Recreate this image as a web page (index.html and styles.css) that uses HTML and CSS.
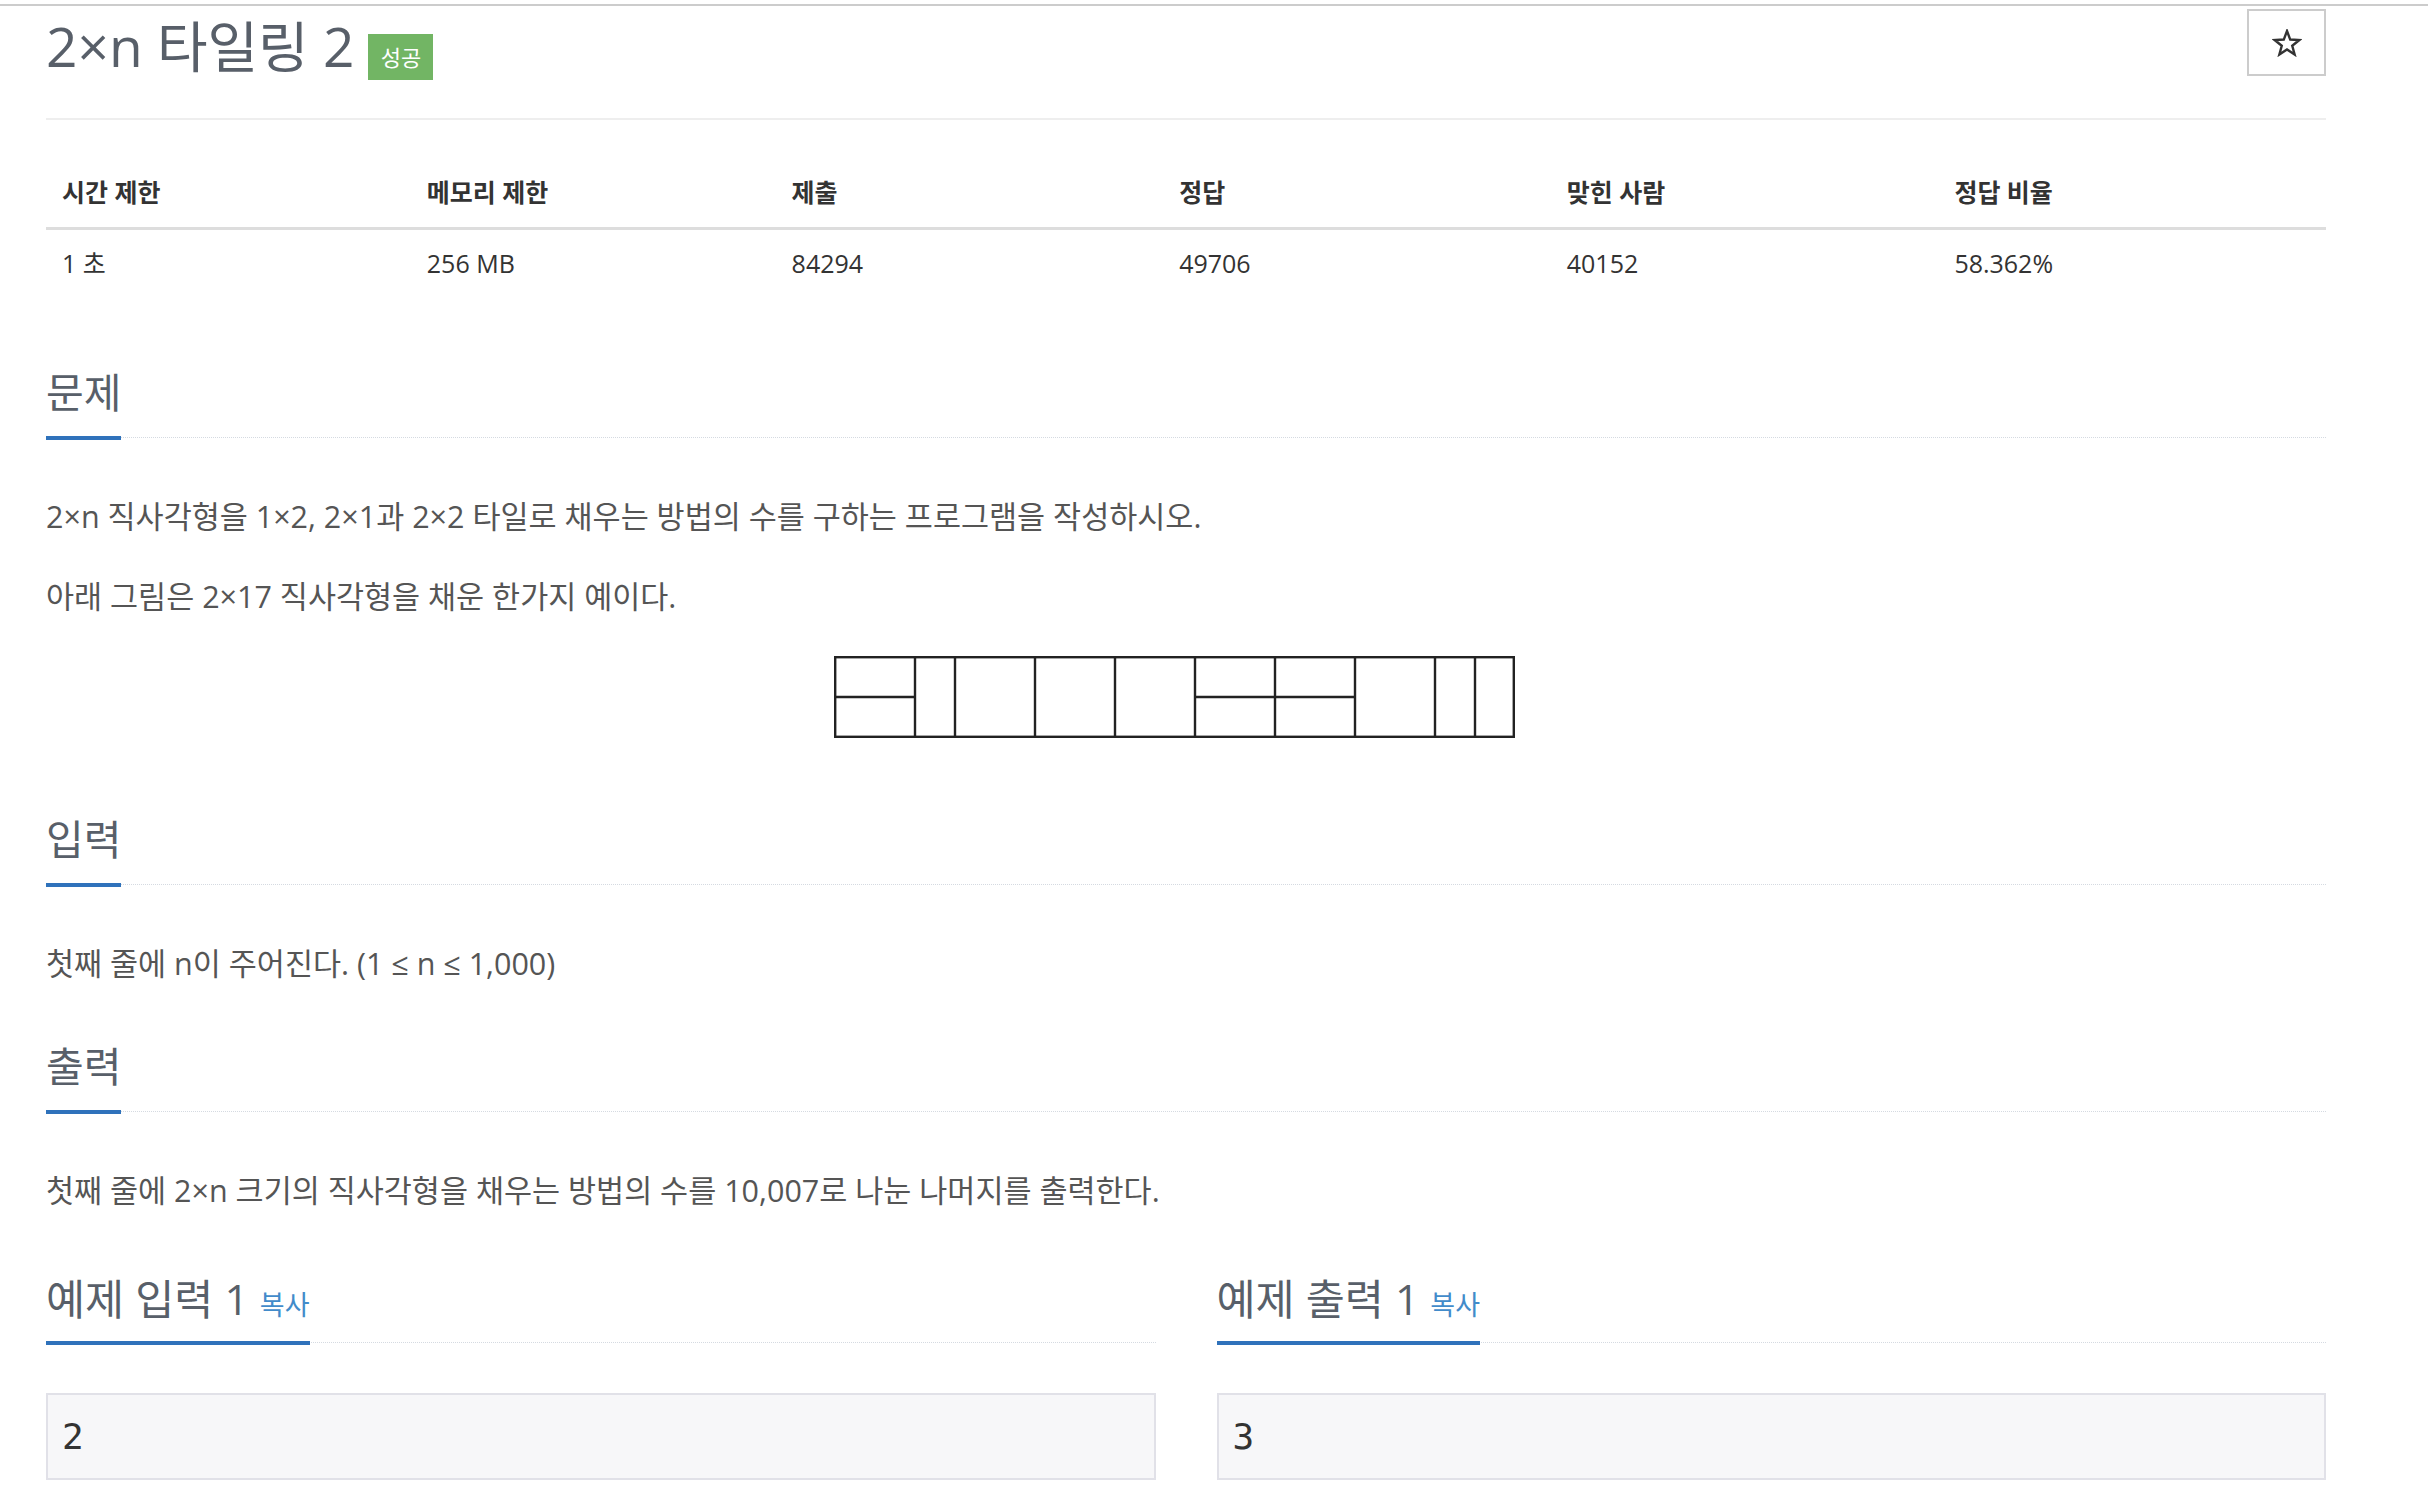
FILE: index.html
```html
<!DOCTYPE html>
<html lang="ko">
<head>
<meta charset="utf-8">
<title>2×n 타일링 2</title>
<link rel="stylesheet" href="styles.css">
</head>
<body>
<div class="topbar"></div>
<div class="container">
  <div class="page-header">
    <h1 class="title"><span class="title-text">2×n 타일링 2</span><span class="badge">성공</span></h1>
    <button class="star" type="button" aria-label="즐겨찾기">
      <svg width="30" height="28" viewBox="-1 -1 30 28"><polygon points="14,1 17.23,9.55 26.36,9.98 19.23,15.7 21.64,24.52 14,19.5 6.36,24.52 8.77,15.7 1.64,9.98 10.77,9.55" fill="none" stroke="#333" stroke-width="2.4" stroke-linejoin="miter"/></svg>
    </button>
  </div>

  <table class="info">
    <colgroup>
      <col class="c16"><col class="c16"><col class="c17"><col class="c17"><col class="c17"><col class="c17">
    </colgroup>
    <thead>
      <tr><th>시간 제한</th><th>메모리 제한</th><th>제출</th><th>정답</th><th>맞힌 사람</th><th>정답 비율</th></tr>
    </thead>
    <tbody>
      <tr><td>1 초</td><td>256 MB</td><td>84294</td><td>49706</td><td>40152</td><td>58.362%</td></tr>
    </tbody>
  </table>

  <section class="sec first">
    <div class="headline"><h2>문제</h2></div>
    <div class="desc">
      <p>2×n 직사각형을 1×2, 2×1과 2×2 타일로 채우는 방법의 수를 구하는 프로그램을 작성하시오.</p>
      <p>아래 그림은 2×17 직사각형을 채운 한가지 예이다.</p>
      <div class="fig">
        <svg width="704" height="82" viewBox="0 0 704 82">
          <g fill="none" stroke="#222" stroke-width="2.4">
            <rect x="1.2" y="1.2" width="678.6" height="79.6"/>
            <line x1="81" y1="1" x2="81" y2="81"/>
            <line x1="121" y1="1" x2="121" y2="81"/>
            <line x1="201" y1="1" x2="201" y2="81"/>
            <line x1="281" y1="1" x2="281" y2="81"/>
            <line x1="361" y1="1" x2="361" y2="81"/>
            <line x1="441" y1="1" x2="441" y2="81"/>
            <line x1="521" y1="1" x2="521" y2="81"/>
            <line x1="601" y1="1" x2="601" y2="81"/>
            <line x1="641" y1="1" x2="641" y2="81"/>
            <line x1="1" y1="41" x2="81" y2="41"/>
            <line x1="361" y1="41" x2="521" y2="41"/>
          </g>
        </svg>
      </div>
    </div>
  </section>

  <section class="sec">
    <div class="headline"><h2>입력</h2></div>
    <div class="desc">
      <p>첫째 줄에 n이 주어진다. (1 ≤ n ≤ 1,000)</p>
    </div>
  </section>

  <section class="sec">
    <div class="headline"><h2>출력</h2></div>
    <div class="desc">
      <p>첫째 줄에 2×n 크기의 직사각형을 채우는 방법의 수를 10,007로 나눈 나머지를 출력한다.</p>
    </div>
  </section>

  <div class="samples">
    <section class="sample">
      <div class="headline"><h2>예제 입력 1 <a class="copy" href="#">복사</a></h2></div>
      <pre class="sampledata">2</pre>
    </section>
    <section class="sample">
      <div class="headline"><h2>예제 출력 1 <a class="copy" href="#">복사</a></h2></div>
      <pre class="sampledata">3</pre>
    </section>
  </div>
</div>
</body>
</html>
```

FILE: styles.css
```css
html, body {
  margin: 0;
  padding: 0;
  background: #fff;
}

body {
  font-family: "Open Sans", "Noto Sans CJK KR", sans-serif;
  color: #333;
}

.topbar {
  height: 4px;
  border-bottom: 2px solid #cccccc;
}

.container {
  padding: 0 102px 0 46px;
}

/* ---------- header ---------- */
.page-header {
  display: flex;
  justify-content: space-between;
  align-items: flex-start;
  padding-bottom: 38px;
  border-bottom: 2px solid #eeeeee;
}

.title {
  display: flex;
  align-items: flex-start;
  margin: 10px 0 0;
  font-size: 55px;
  font-weight: 400;
  line-height: 60px;
  color: #585f69;
}

.title-text {
  white-space: nowrap;
}

.badge {
  display: flex;
  align-items: center;
  justify-content: center;
  width: 65px;
  height: 46px;
  margin: 18px 0 0 14px;
  background: #72b564;
  color: #fff;
  font-size: 22px;
  line-height: 1;
}

.star {
  display: flex;
  align-items: center;
  justify-content: center;
  width: 79px;
  height: 67px;
  margin: 3px 0 0;
  padding: 0;
  border: 2px solid #cccccc;
  background: #fff;
  box-sizing: border-box;
}

/* ---------- info table ---------- */
.info {
  width: 100%;
  margin-top: 38px;
  table-layout: fixed;
  border-collapse: separate;
  border-spacing: 0;
  font-size: 25px;
  line-height: 33px;
  color: #333;
}

.c16 { width: 16%; }
.c17 { width: 17%; }

.info th {
  text-align: left;
  font-weight: 700;
  padding: 18px 16px;
  border-bottom: 3px solid #dddddd;
}

.info td {
  padding: 17px 16px 19px;
}

/* ---------- sections ---------- */
.sec {
  margin-top: 49px;
}

.sec.first {
  margin-top: 63px;
}

.headline {
  display: flex;
  align-items: flex-end;
  border-bottom: 1px dotted #d5dae1;
}

.headline h2 {
  margin: 0 0 -3px;
  padding: 2px 0 16px;
  border-bottom: 4px solid #2f72bb;
  font-size: 41px;
  font-weight: 400;
  line-height: 56px;
  color: #585f69;
  white-space: nowrap;
}

.sample .headline h2 {
  padding: 4px 0 14px;
  font-size: 42.5px;
}

.desc {
  margin-top: 54px;
}

.desc p {
  margin: 0 0 32px;
  font-size: 30.5px;
  line-height: 48px;
  color: #555;
}

.fig {
  margin: 36px 0 71px;
}

.fig svg {
  display: block;
  margin: 0 auto;
}

/* ---------- samples ---------- */
.samples {
  display: grid;
  grid-template-columns: 1fr 1fr;
  column-gap: 61px;
  margin-top: 53px;
}

.copy {
  font-size: 27px;
  line-height: 1;
  color: #428bca;
  text-decoration: none;
}

.sampledata {
  margin: 50px 0 0;
  padding: 0 14px;
  border: 2px solid #e1e1e8;
  background: #f7f7f9;
  font-family: "DejaVu Sans Mono", "Liberation Mono", monospace;
  font-size: 36px;
  line-height: 83px;
  color: #333;
}
```
